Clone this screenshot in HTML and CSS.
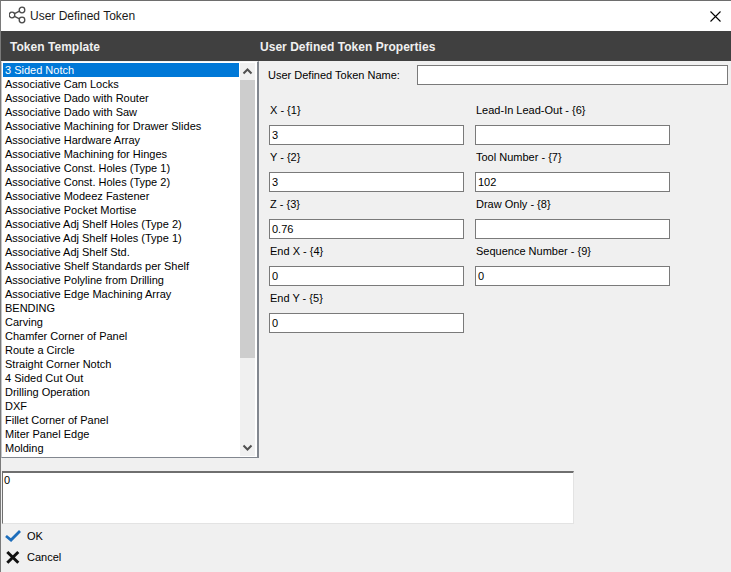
FILE: index.html
```html
<!DOCTYPE html>
<html lang="en">
<head>
<meta charset="utf-8">
<title>User Defined Token</title>
<link rel="stylesheet" href="styles.css">
</head>
<body>
<div class="window">
  <header class="titlebar">
    <svg class="app-icon" width="18" height="18" viewBox="0 0 18 18" fill="none" stroke="#4a4a4a" stroke-width="1.3">
      <circle cx="3" cy="9" r="2.8"/><circle cx="13" cy="4" r="2.8"/><circle cx="13" cy="14" r="2.8"/>
      <path d="M5.5 7.7 10.5 5.2M5.5 10.3 10.5 12.8"/>
    </svg>
    <span class="title">User Defined Token</span>
    <svg class="close" width="11" height="11" viewBox="0 0 11 11" stroke="#000" stroke-width="1.1"><path d="M.5.5 10.5 10.5M10.5.5.5 10.5"/></svg>
  </header>
  <div class="heads">
    <div class="head head-left">Token Template</div>
    <div class="head">User Defined Token Properties</div>
  </div>
  <div class="main">
    <div class="listbox">
      <ul class="items">
        <li class="sel">3 Sided Notch</li>
        <li>Associative Cam Locks</li>
        <li>Associative Dado with Router</li>
        <li>Associative Dado with Saw</li>
        <li>Associative Machining for Drawer Slides</li>
        <li>Associative Hardware Array</li>
        <li>Associative Machining for Hinges</li>
        <li>Associative Const. Holes (Type 1)</li>
        <li>Associative Const. Holes (Type 2)</li>
        <li>Associative Modeez Fastener</li>
        <li>Associative Pocket Mortise</li>
        <li>Associative Adj Shelf Holes (Type 2)</li>
        <li>Associative Adj Shelf Holes (Type 1)</li>
        <li>Associative Adj Shelf Std.</li>
        <li>Associative Shelf Standards per Shelf</li>
        <li>Associative Polyline from Drilling</li>
        <li>Associative Edge Machining Array</li>
        <li>BENDING</li>
        <li>Carving</li>
        <li>Chamfer Corner of Panel</li>
        <li>Route a Circle</li>
        <li>Straight Corner Notch</li>
        <li>4 Sided Cut Out</li>
        <li>Drilling Operation</li>
        <li>DXF</li>
        <li>Fillet Corner of Panel</li>
        <li>Miter Panel Edge</li>
        <li>Molding</li>
      </ul>
      <div class="scrollbar">
        <svg class="arrow" width="15" height="17" viewBox="0 0 15 17" fill="none" stroke="#505050" stroke-width="2"><path d="M3.5 10.5 7.5 6.5 11.5 10.5"/></svg>
        <div class="thumb"></div>
        <svg class="arrow arrow-down" width="15" height="17" viewBox="0 0 15 17" fill="none" stroke="#505050" stroke-width="2"><path d="M3.5 6.5 7.5 10.5 11.5 6.5"/></svg>
      </div>
    </div>
    <div class="props">
      <div class="name-row">
        <label class="name-label">User Defined Token Name:</label>
        <div class="input name-input"></div>
      </div>
      <div class="fields">
        <div class="field"><label>X - {1}</label><div class="input">3</div></div>
        <div class="field"><label>Lead-In Lead-Out - {6}</label><div class="input"></div></div>
        <div class="field"><label>Y - {2}</label><div class="input">3</div></div>
        <div class="field"><label>Tool Number - {7}</label><div class="input">102</div></div>
        <div class="field"><label>Z - {3}</label><div class="input">0.76</div></div>
        <div class="field"><label>Draw Only - {8}</label><div class="input"></div></div>
        <div class="field"><label>End X - {4}</label><div class="input">0</div></div>
        <div class="field"><label>Sequence Number - {9}</label><div class="input">0</div></div>
        <div class="field"><label>End Y - {5}</label><div class="input">0</div></div>
      </div>
    </div>
  </div>
  <div class="memo">0</div>
  <div class="actions">
    <div class="action">
      <svg width="16" height="13" viewBox="0 0 16 13" fill="none" stroke="#1c6dbb" stroke-width="2.8"><path d="M1 7 6 11 15 2"/></svg>
      <span>OK</span>
    </div>
    <div class="action">
      <svg width="16" height="14" viewBox="0 0 16 14" fill="none" stroke="#111" stroke-width="3"><path d="M2.3 2 13.3 12.8M13.3 2 2.3 12.8"/></svg>
      <span>Cancel</span>
    </div>
  </div>
</div>
</body>
</html>
```
FILE: styles.css
```css
* { box-sizing: border-box; }
html, body { margin: 0; padding: 0; }
body {
  width: 731px;
  height: 572px;
  overflow: hidden;
  background: #f0f0f0;
  font-family: "Liberation Sans", Arial, sans-serif;
  font-size: 11px;
  color: #000;
}
.window { display: flex; flex-direction: column; height: 572px; border-top: 1px solid #6e6e6e; border-left: 1px solid #7a7a7a; }
.titlebar { display: flex; align-items: center; height: 30px; background: #fff; padding: 0 0 2px 8px; }
.app-icon { flex: none; }
.title { margin-left: 3px; font-size: 12px; color: #1a1a1a; padding-top: 2px; }
.close { margin-left: auto; margin-right: 10px; margin-top: 2px; }
.heads { display: flex; height: 30px; padding-top: 2px; align-items: center; background: #404040; color: #f0f0f0; font-weight: 700; font-size: 12px; letter-spacing: 0.03px; }
.head-left { width: 259px; padding-left: 9px; }
.main { display: flex; height: 397px; }
.listbox {
  display: flex;
  width: 258px;
  height: 397px;
  background: #fff;
  border: 1px solid #82878f;
  border-top-color: #f4f4f4;
  border-left-color: #c4c6ca;
  border-right-width: 2px;
  padding: 1px 2px 1px 0;
}
.items { flex: 1; margin: 0 1px 0 0; padding: 0 0 0 1px; list-style: none; overflow: hidden; }
.items li { height: 14px; line-height: 14px; padding-left: 2px; white-space: nowrap; }
.items li.sel { background: #0078d7; color: #fff; }
.scrollbar { display: flex; flex-direction: column; flex: none; width: 15px; background: #f0f0f0; }
.arrow { display: block; flex: none; }
.thumb { height: 278px; background: #cdcdcd; }
.arrow-down { margin-top: auto; }
.props { flex: 1; padding: 4px 3px 0 9px; }
.name-row { display: flex; align-items: center; height: 20px; }
.name-label { width: 149px; }
.input {
  height: 20px;
  line-height: 18px;
  padding-left: 2px;
  background: #fff;
  border: 1px solid #7a7a7a;
  font-size: 11px;
}
.name-input { flex: 1; }
.fields { display: grid; grid-template-columns: 195px 195px; column-gap: 11px; grid-auto-rows: 47px; margin: 13px 0 0 1px; }
.field { display: flex; flex-direction: column; height: 47px; }
.field label { height: 27px; line-height: 24px; padding-left: 1px; }
.memo {
  width: 572px;
  height: 53px;
  margin: 13px 0 0 1px;
  padding: 1px 0 0 1px;
  background: #fff;
  border: 1px solid #e3e3e3;
  border-top: 2px solid #6f6f6f;
  border-left: 1px solid #6f6f6f;
  line-height: 13px;
}
.actions { display: flex; flex-direction: column; padding: 1px 0 0 4px; }
.action { display: flex; align-items: center; height: 21px; }
.action svg { flex: none; }
.action span { margin-left: 6px; }
```
